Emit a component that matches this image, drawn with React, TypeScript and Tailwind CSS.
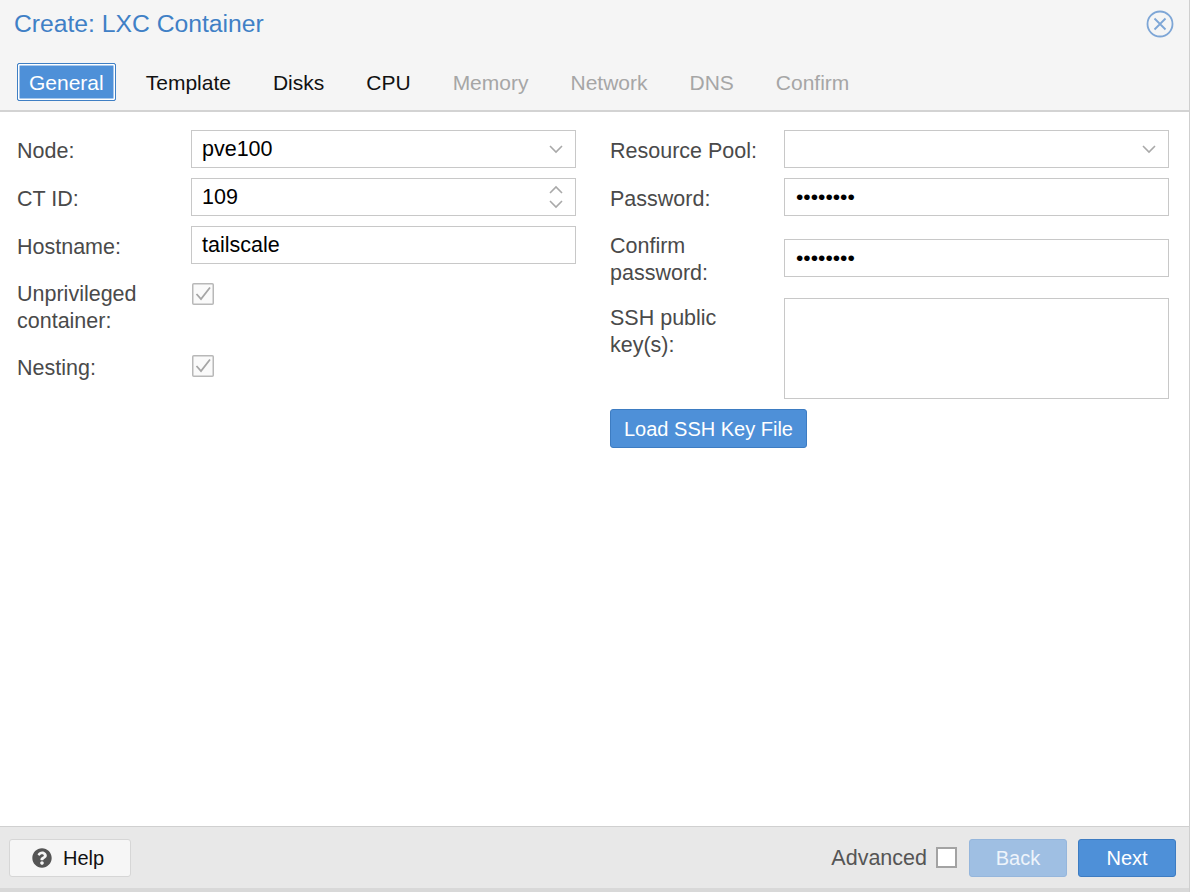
import { FaQuestionCircle } from 'react-icons/fa';

const font = { fontFamily: '"Liberation Sans", Arial, sans-serif' };

const tabs = [
  { name: 'General', state: 'active' },
  { name: 'Template', state: 'on' },
  { name: 'Disks', state: 'on' },
  { name: 'CPU', state: 'on' },
  { name: 'Memory', state: 'off' },
  { name: 'Network', state: 'off' },
  { name: 'DNS', state: 'off' },
  { name: 'Confirm', state: 'off' },
];

const Chevron = ({ up = false }: { up?: boolean }) => (
  <svg width="16" height="10" viewBox="0 0 16 10" className="block">
    <polyline
      points={up ? '2,8 8,2 14,8' : '2,2 8,8 14,2'}
      fill="none"
      stroke="#a9a9a9"
      strokeWidth="1.6"
    />
  </svg>
);

const Check = () => (
  <svg width="22" height="22" viewBox="0 0 22 22" className="block">
    <rect x="0.75" y="0.75" width="20.5" height="20.5" rx="1" fill="#fafafa" stroke="#b8b8b8" strokeWidth="1.5" />
    <polyline points="4.5,11 9,16 18,4.5" fill="none" stroke="#a5a5a5" strokeWidth="1.8" />
  </svg>
);

const Label = ({ children }: { children: React.ReactNode }) => (
  <div className="w-[174px] shrink-0 pt-[7px] pb-[3px] text-[21.5px] leading-[27px] text-[#4a4a4a]">{children}</div>
);

const Field = ({ value, dots = false, children }: { value?: string; dots?: boolean; children?: React.ReactNode }) => (
  <div className="flex h-[38px] flex-1 items-center border border-[#c8c8c8] bg-white pl-[10px] pr-[11px]">
    <span className={dots ? 'flex-1 pl-[1px] text-[21px] text-black' : 'flex-1 pt-[1px] text-[21.5px] text-black'}>{value}</span>
    {children}
  </div>
);

export default function App() {
  return (
    <div className="flex h-[892px] w-[1190px] flex-col border-r border-[#cfcfcf] bg-[#f5f5f5]" style={font}>
      <div className="flex h-[110px] shrink-0 flex-col">
        <div className="flex h-[47px] items-center justify-between pl-[14px] pr-[15px]">
          <span className="text-[24.7px] text-[#3f80c6]">Create: LXC Container</span>
          <svg width="28" height="28" viewBox="0 0 28 28">
            <circle cx="14" cy="14" r="12.5" fill="none" stroke="#7ea6d6" strokeWidth="1.8" />
            <path d="M8.5 8.5 L19.5 19.5 M19.5 8.5 L8.5 19.5" stroke="#7ea6d6" strokeWidth="1.8" />
          </svg>
        </div>
        <div className="mt-[16px] flex h-[38px] gap-[18px] pl-[17px]">
          {tabs.map((t) =>
            t.state === 'active' ? (
              <div
                key={t.name}
                className="flex items-center rounded-[2px] border border-[#3f7fc4] bg-[#4e90d8] px-[11px] pt-[1px] text-[21px] text-white shadow-[inset_0_0_0_1.5px_#ffffff]"
              >
                {t.name}
              </div>
            ) : (
              <div
                key={t.name}
                className={
                  t.state === 'on'
                    ? 'flex items-center border border-transparent px-[11px] pt-[1px] text-[21px] text-[#111]'
                    : 'flex items-center border border-transparent px-[11px] pt-[1px] text-[21px] text-[#a6a6a6]'
                }
              >
                {t.name}
              </div>
            )
          )}
        </div>
      </div>

      <div className="flex flex-1 gap-[34px] border-t-2 border-[#d3d3d3] bg-white pl-[17px] pt-[18px]">
        <div className="flex w-[559px] flex-col gap-[10px]">
          <div className="flex items-center">
            <Label>Node:</Label>
            <Field value="pve100">
              <Chevron />
            </Field>
          </div>
          <div className="flex items-center">
            <Label>CT ID:</Label>
            <Field value="109">
              <div className="flex flex-col gap-[4px]">
                <Chevron up />
                <Chevron />
              </div>
            </Field>
          </div>
          <div className="flex items-center">
            <Label>Hostname:</Label>
            <Field value="tailscale" />
          </div>
          <div className="flex items-start">
            <Label>
              Unprivileged
              <br />
              container:
            </Label>
            <div className="mt-[9px] pl-[1px]">
              <Check />
            </div>
          </div>
          <div className="flex items-start">
            <Label>Nesting:</Label>
            <div className="mt-[7px] pl-[1px]">
              <Check />
            </div>
          </div>
        </div>

        <div className="flex w-[559px] flex-col gap-[10px]">
          <div className="flex items-center">
            <Label>Resource Pool:</Label>
            <Field value="">
              <Chevron />
            </Field>
          </div>
          <div className="flex items-center">
            <Label>Password:</Label>
            <Field value="••••••••" dots />
          </div>
          <div className="flex items-center">
            <Label>
              Confirm
              <br />
              password:
            </Label>
            <Field value="••••••••" dots />
          </div>
          <div className="-mt-[2px] flex items-start">
            <Label>
              SSH public
              <br />
              key(s):
            </Label>
            <div className="h-[101px] flex-1 border border-[#c8c8c8] bg-white" />
          </div>
          <div>
            <button className="h-[39px] w-[197px] rounded-[3px] border border-[#3d7cc2] bg-[#4e90d8] text-[20px] text-white">
              Load SSH Key File
            </button>
          </div>
        </div>
      </div>

      <div className="flex h-[66px] shrink-0 items-center justify-between border-t border-[#d0d0d0] border-b-4 border-b-[#d8d8d8] bg-[#e8e8e8] pl-[9px] pr-[13px]">
        <button className="flex h-[38px] w-[122px] items-center gap-[11px] rounded-[3px] border border-[#d6d6d6] bg-[#f6f6f6] pl-[22px] text-[20px] text-[#111]">
          <FaQuestionCircle size={20} color="#555555" />
          <span>Help</span>
        </button>
        <div className="flex items-center">
          <span className="pt-[1px] text-[21.5px] text-[#555555]">Advanced</span>
          <div className="ml-[9px] h-[21px] w-[21px] border-2 border-[#a3a3a3] bg-white" />
          <button className="ml-[12px] h-[38px] w-[98px] rounded-[3px] border border-[#95b6dc] bg-[#9fbfe3] text-[20px] text-[#eef4fb]">
            Back
          </button>
          <button className="ml-[11px] h-[38px] w-[98px] rounded-[3px] border border-[#3d7cc2] bg-[#4e90d8] text-[20px] text-white">
            Next
          </button>
        </div>
      </div>
    </div>
  );
}
